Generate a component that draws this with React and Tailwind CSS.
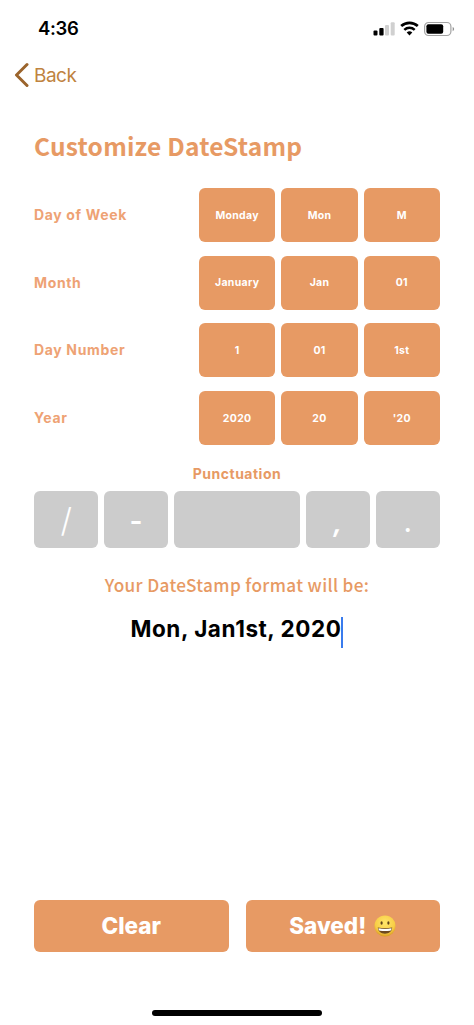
import { useState } from "react";

const rows = [
  { label: "Day of Week", options: ["Monday", "Mon", "M"] },
  { label: "Month", options: ["January", "Jan", "01"] },
  { label: "Day Number", options: ["1", "01", "1st"] },
  { label: "Year", options: ["2020", "20", "'20"] },
];

function StatusBar() {
  return (
    <div className="flex h-[57px] items-center justify-between pl-[38px] pr-[19px]">
      <span className="font-['Inter',sans-serif] text-[18.5px] font-semibold leading-none tracking-[-0.3px]">4:36</span>
      <svg className="h-4 w-[82px]" viewBox="0 0 82 16" fill="none">
        <rect x="0.5" y="9.5" width="4" height="5" rx="1" fill="#000" />
        <rect x="6.3" y="7" width="4.3" height="7.5" rx="1" fill="#000" />
        <rect x="12" y="4" width="4" height="10.5" rx="1" fill="#d0d0d0" />
        <rect x="17.7" y="1.2" width="4" height="13.3" rx="1" fill="#d0d0d0" />
        <path d="M28.2 5.1a12.2 12.2 0 0 1 16.6 0" stroke="#000" strokeWidth="2.7" />
        <path d="M31.3 8.9a7.6 7.6 0 0 1 10.4 0" stroke="#000" strokeWidth="2.5" />
        <path d="M33.7 11.5a4.1 4.1 0 0 1 5.6 0l-2.8 2.9z" fill="#000" />
        <rect x="51.6" y="1.5" width="26.3" height="13" rx="4" stroke="#a3a3a3" strokeWidth="1.2" />
        <rect x="53.4" y="3.3" width="16.8" height="9.4" rx="2" fill="#000" />
        <path d="M79.7 6v4.2c1.9-.7 1.9-3.5 0-4.2z" fill="#8c8c8c" />
      </svg>
    </div>
  );
}

function OptionButton({ children, onClick }) {
  return (
    <button onClick={onClick} className="h-[54px] rounded-md bg-[#e79a64] pt-px text-[10.5px] font-bold tracking-[0.3px] text-white">
      {children}
    </button>
  );
}

function Key({ children, className, onClick }) {
  return (
    <button onClick={onClick} className={`flex h-[57px] items-center justify-center rounded-md bg-[#cccccc] text-white ${className}`}>
      {children}
    </button>
  );
}

function Grin() {
  return (
    <svg className="h-[22px] w-[22px]" viewBox="0 0 22 22">
      <defs>
        <radialGradient id="face" cx="50%" cy="35%" r="65%">
          <stop offset="0" stopColor="#ffe66b" />
          <stop offset="0.7" stopColor="#f8ce45" />
          <stop offset="1" stopColor="#d99a22" />
        </radialGradient>
      </defs>
      <circle cx="11" cy="11" r="10.6" fill="url(#face)" />
      <ellipse cx="7.6" cy="8" rx="1.1" ry="1.8" fill="#61431a" />
      <ellipse cx="14.4" cy="8" rx="1.1" ry="1.8" fill="#61431a" />
      <path d="M3.8 12.5q7.2 1.6 14.4 0c-.3 4-3.2 6.2-7.2 6.2s-6.9-2.2-7.2-6.2z" fill="#6d4a20" />
      <path d="M4.5 13.2q6.5 1.4 13 0c.1 1.4-.5 2.3-1.5 2.5q-5 .8-10 0c-1-.2-1.6-1.1-1.5-2.5z" fill="#fff" />
    </svg>
  );
}

export default function App() {
  const [format, setFormat] = useState("Mon, Jan1st, 2020");
  const add = (part) => setFormat((current) => current + part);

  return (
    <div className="flex h-[1025px] w-[474px] flex-col overflow-hidden bg-white font-['Inter',sans-serif] text-black">
      <StatusBar />

      <button className="ml-[14px] flex h-9 items-center gap-[5px] self-start text-[#c08340]">
        <svg className="h-[26px] w-[15px]" viewBox="0 0 15 26" fill="none" stroke="#9b642c" strokeWidth="3" strokeLinecap="round" strokeLinejoin="round">
          <path d="M13 2.5L2.5 13 13 23.5" />
        </svg>
        <span className="text-[19px] leading-none tracking-[-0.5px]">Back</span>
      </button>

      <main className="flex flex-1 flex-col px-[34px] pt-[36px]">
        <h1 className="h-[59px] whitespace-nowrap font-['Noto_Sans_CJK_JP',sans-serif] text-[24.5px] font-bold leading-[33px] tracking-[0.2px] text-[#e79a64]">
          Customize DateStamp
        </h1>

        <div className="flex flex-col gap-[13.7px]">
          {rows.map((row) => (
            <div key={row.label} className="flex items-center">
              <div className="w-[165px] pb-px text-[14px] font-bold tracking-[0.65px] text-[#eea274]">{row.label}</div>
              <div className="grid flex-1 grid-cols-3 gap-[6px]">
                {row.options.map((option) => (
                  <OptionButton key={option} onClick={() => add(option)}>{option}</OptionButton>
                ))}
              </div>
            </div>
          ))}
        </div>

        <h2 className="mt-[19px] text-center text-[14px] font-bold leading-5 tracking-[0.5px] text-[#e79a64]">Punctuation</h2>

        <div className="mt-[7px] flex gap-[5.7px]">
          <Key className="w-[64.3px] text-[33px] font-light" onClick={() => add("/")}>
            <span className="pt-[2px]">/</span>
          </Key>
          <Key className="w-[64.3px] text-[28px] font-semibold" onClick={() => add("-")}>
            <span className="pt-[2px]">-</span>
          </Key>
          <Key className="flex-1" onClick={() => add(" ")} />
          <Key className="w-[64.3px] text-[26px] font-bold italic" onClick={() => add(",")}>
            <span className="pt-[5px]">,</span>
          </Key>
          <Key className="w-[64.3px] text-[25px] font-semibold" onClick={() => add(".")}>
            <span className="pt-[9px]">.</span>
          </Key>
        </div>

        <p className="mt-[25px] whitespace-nowrap text-center font-['Noto_Sans_CJK_JP',sans-serif] text-[17.2px] font-medium leading-[23px] tracking-[0.35px] text-[#e79a64]">
          Your DateStamp format will be:
        </p>

        <div className="mt-[21px] flex h-[31px] items-start justify-center">
          <span className="whitespace-nowrap text-[22.5px] font-bold leading-[23px] tracking-[0.55px]">{format}</span>
          <span className="h-[31px] w-[2px] shrink-0 bg-[#397bed]" />
        </div>

        <div className="mb-[58px] mt-auto grid grid-cols-2 gap-[17px] text-[22.5px] font-extrabold text-white">
          <button className="h-[52px] rounded-md bg-[#e79a64]" onClick={() => setFormat("")}>Clear</button>
          <button className="flex h-[52px] items-center justify-center gap-2 rounded-md bg-[#e79a64]">
            <span>Saved!</span>
            <Grin />
          </button>
        </div>
      </main>

      <div className="mb-[9px] h-[6px] w-[170px] self-center rounded-full bg-black" />
    </div>
  );
}
